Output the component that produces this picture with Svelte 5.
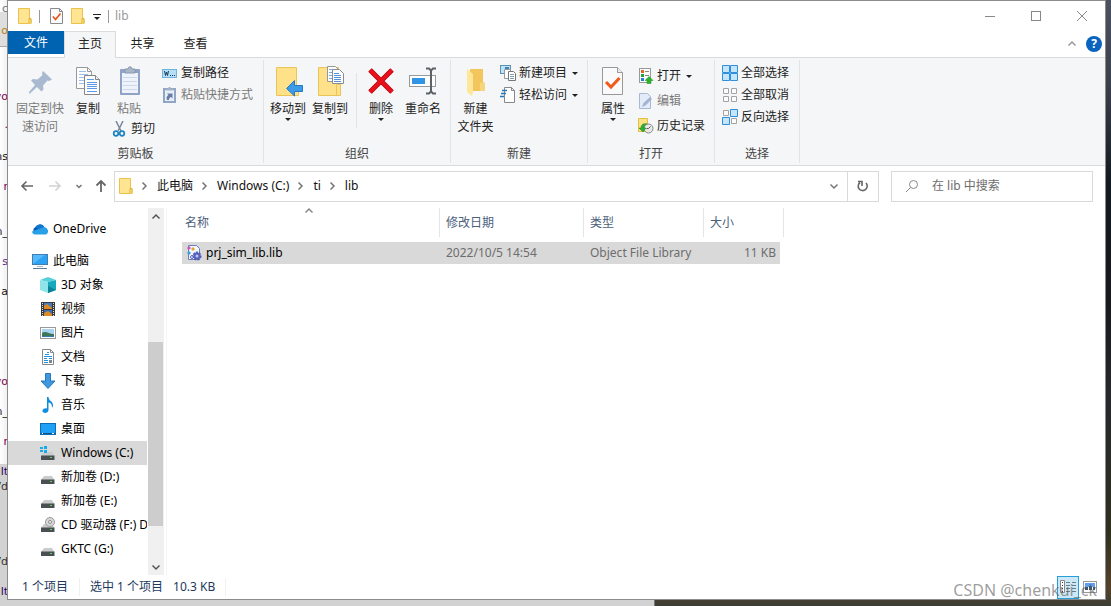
<script lang="ts">
  interface NavItem {
    icon: string;
    label: string;
    root?: boolean;
    selected?: boolean;
  }

  const tabs = ["主页", "共享", "查看"];

  const crumbs = ["此电脑", "Windows (C:)", "ti", "lib"];

  const navItems: NavItem[] = [
    { icon: "cloud", label: "OneDrive", root: true },
    { icon: "pc", label: "此电脑", root: true },
    { icon: "cube", label: "3D 对象" },
    { icon: "video", label: "视频" },
    { icon: "picture", label: "图片" },
    { icon: "document", label: "文档" },
    { icon: "download", label: "下载" },
    { icon: "music", label: "音乐" },
    { icon: "desktop", label: "桌面" },
    { icon: "drive-win", label: "Windows (C:)", selected: true },
    { icon: "drive", label: "新加卷 (D:)" },
    { icon: "drive", label: "新加卷 (E:)" },
    { icon: "drive-cd", label: "CD 驱动器 (F:) DVD" },
    { icon: "drive", label: "GKTC (G:)" },
  ];

  const files = [
    {
      name: "prj_sim_lib.lib",
      modified: "2022/10/5 14:54",
      type: "Object File Library",
      size: "11 KB",
    },
  ];

  // what shows of the editor behind the window
  const codeLines = [
    { y: 0, text: "c", color: "#777" },
    { y: 22, text: "o", color: "#b87d14" },
    { y: 88, text: "vo", color: "#7f0055" },
    { y: 116, text: ".", color: "#7f0055" },
    { y: 148, text: "ns", color: "#111" },
    { y: 178, text: "r", color: "#7f0055" },
    { y: 223, text: "n_", color: "#222" },
    { y: 253, text: "s", color: "#5b2a86" },
    { y: 283, text: "a", color: "#111" },
    { y: 373, text: "vo", color: "#7f0055" },
    { y: 403, text: "n_", color: "#222" },
    { y: 433, text: "r", color: "#7f0055" },
    { y: 463, text: "lt", color: "#2a0055" },
    { y: 478, text: "Vd", color: "#333" },
    { y: 553, text: "Vd", color: "#333" },
    { y: 583, text: "lt", color: "#2a0055" },
  ];

  let search = $state("");
</script>

{#snippet icon(name: string)}
  {#if name === "folder"}
    <svg width="14" height="16" viewBox="0 0 14 16">
      <path d="M.5.5h11v10l1.5.5v4.500H.5z" fill="#ffe591" stroke="#ecc24a" />
      <path d="M11 15.500v-5h2v5" fill="#ffe591" stroke="#e0b030" />
    </svg>
  {:else if name === "check-page"}
    <svg width="13" height="16" viewBox="0 0 13 16">
      <path d="M.5.500h9l3 3v12H.5z" fill="#fafafa" stroke="#8a8a8a" />
      <path d="M9.500.500v3h3" fill="none" stroke="#8a8a8a" />
      <path d="M3 8.500l2.500 3 5-6" fill="none" stroke="#e8541c" stroke-width="1.700" />
    </svg>
  {:else if name === "pin"}
    <svg width="32" height="32" viewBox="0 0 32 32">
      <path d="M19 5l9 8.500-3 1.500-1.500-.5-4.500 5 .5 4-2 2-4.500-4.500-7 6.500-1 0 0-1.500 6-7L7 14.500l2-1.500 4.500.5 5-4.500-.5-2z" fill="#a9b9d0" />
    </svg>
  {:else if name === "copy"}
    <svg width="32" height="32" viewBox="0 0 32 32">
      <path d="M4.500 1.500h11l4 4v17h-15z" fill="#fdfdfd" stroke="#999" />
      <path d="M15.500 1.500v4h4" fill="none" stroke="#999" />
      <path d="M7 5.500h7M7 8.500h9M7 11.500h9M7 14.500h9M7 17.500h9" stroke="#9cc0ee" />
      <path d="M12.500 9.500h11l4 4v15h-15z" fill="#fdfdfd" stroke="#858585" />
      <path d="M23.500 9.500v4h4" fill="#eee" stroke="#858585" />
      <path d="M15 13.500h7M15 16.500h10M15 18.500h10M15 20.500h10M15 22.500h10M15 25.500h10" stroke="#5b98ea" />
    </svg>
  {:else if name === "paste"}
    <svg width="32" height="32" viewBox="0 0 32 32">
      <rect x="7" y="3" width="20" height="26" rx="1" fill="#8fa3c6" />
      <path d="M9 7h16v20H9z" fill="#edf2fb" />
      <path d="M10 11.500h14M10 15.500h14M10 19.500h14M10 23.500h14" stroke="#ccd9ed" />
      <path d="M12 7V3h3c0-3 4-3 4 0h3v4z" fill="#aab5c6" stroke="#8998b1" />
    </svg>
  {:else if name === "scissors"}
    <svg width="16" height="16" viewBox="0 0 16 16">
      <path d="M4 0l5 10M11 0L6 10" stroke="#76889d" stroke-width="1.500" />
      <circle cx="4" cy="12.500" r="2.300" fill="none" stroke="#1c82c6" stroke-width="1.700" />
      <circle cx="10" cy="12.500" r="2.300" fill="none" stroke="#1c82c6" stroke-width="1.700" />
    </svg>
  {:else if name === "path"}
    <svg width="16" height="16" viewBox="0 0 16 16">
      <rect x=".5" y="4.500" width="14" height="8" fill="#b5def7" stroke="#6fb4dd" />
      <path d="M2.500 6l1 4.500 1-3.500 1 3.500 1-4.500" fill="none" stroke="#163b5c" />
      <path d="M8 10.500h1M10 10.500h1M12 10.500h1" stroke="#163b5c" />
    </svg>
  {:else if name === "paste-link"}
    <svg width="16" height="16" viewBox="0 0 16 16">
      <rect x="2" y="2" width="11" height="13" fill="#e8eef8" stroke="#93a5c5" stroke-width="2" />
      <path d="M4 3.500v-2h2c0-2 3-2 3 0h2v2z" fill="#a3b1c8" />
      <path d="M5 13c-1-3 0-4 1.500-5L5 6.500h5.500v5L9 10c-1.500.5-2 1.500-2 3z" fill="#667da8" />
    </svg>
  {:else if name === "move-to"}
    <svg width="32" height="32" viewBox="0 0 32 32">
      <path d="M4.500 1.500h20v19l2 1v8h-22z" fill="#ffe18a" stroke="#eac459" />
      <path d="M30.500 19.500h-8v-5l-8 8 8 7.500v-4.500h8z" fill="#3c9be8" stroke="#2379c6" />
    </svg>
  {:else if name === "copy-to"}
    <svg width="32" height="32" viewBox="0 0 32 32">
      <path d="M4.500 1.500h20v17h2v11h-22z" fill="#ffe18a" stroke="#eac459" />
      <path d="M22.500 29v-10l4-1v11" fill="#ffe18a" stroke="#eac459" />
      <path d="M13.500.500h8l3 3v12h-11z" fill="#fdfdfd" stroke="#999" />
      <path d="M15 3.500h6M15 6.500h6M15 9.500h6M15 12.500h6" stroke="#7caae5" />
      <path d="M18.500 3.500h7l4 4v10h-11z" fill="#fdfdfd" stroke="#8b8b8b" />
      <path d="M20 7.500h5M20 9.500h7M20 11.500h7M20 13.500h7M20 15.500h7" stroke="#5792df" />
    </svg>
  {:else if name === "delete"}
    <svg width="32" height="32" viewBox="0 0 32 32">
      <path d="M5 4l22 22M27 4L5 26" stroke="#b6000d" stroke-width="5" />
      <path d="M5 4l22 22M27 4L5 26" stroke="#e8101b" stroke-width="3.500" />
    </svg>
  {:else if name === "rename"}
    <svg width="32" height="32" viewBox="0 0 32 32">
      <rect x="2.500" y="9.500" width="26" height="11" fill="#fff" stroke="#999" />
      <path d="M5 12h13v6H5z" fill="#3294e4" />
      <path d="M24 4v22M19 2.500h3l2 2 2-2h3M19 27.500h3l2-2 2 2h3" fill="none" stroke="#5d6266" stroke-width="2" />
    </svg>
  {:else if name === "new-folder"}
    <svg width="32" height="32" viewBox="0 0 32 32">
      <path d="M10 3h13v22H10z" fill="#f2c65c" />
      <path d="M20 17l4-1 1 1v8h-5z" fill="#f6d57d" />
      <path d="M7 3l6 5v18l-1 4-5-4z" fill="#ffe699" />
    </svg>
  {:else if name === "new-item"}
    <svg width="16" height="16" viewBox="0 0 16 16">
      <rect x=".5" y=".500" width="10" height="8" fill="#bce3f7" stroke="#5b90ae" />
      <rect x="5" y="2" width="4" height="3" fill="#3b82b5" />
      <path d="M4.500 4.500h6v9h-6z" fill="#fff" stroke="#999" />
      <path d="M8.500 6.500h5l2 2v7h-7z" fill="#fff" stroke="#777" />
      <path d="M10 9.500h4M10 11.500h4M10 13.500h4" stroke="#7d9fbc" />
    </svg>
  {:else if name === "easy-access"}
    <svg width="16" height="16" viewBox="0 0 16 16">
      <path d="M4.500.500h7l3 3v12h-10z" fill="#fff" stroke="#888" />
      <path d="M11.500.500v3h3" fill="none" stroke="#888" />
      <path d="M2 3.500h5M1 6.500h5M0 9.500h4" stroke="#2879b9" stroke-width="1.300" />
    </svg>
  {:else if name === "properties"}
    <svg width="32" height="32" viewBox="0 0 32 32">
      <path d="M5.500 1.500h15l5 5v22h-20z" fill="#fafafa" stroke="#999" />
      <path d="M20.500 1.500v5h5" fill="#eee" stroke="#999" />
      <path d="M9 16l5 5 8.500-9" fill="none" stroke="#f05a1a" stroke-width="3" />
    </svg>
  {:else if name === "open"}
    <svg width="16" height="16" viewBox="0 0 16 16">
      <rect x="1.500" y=".500" width="11" height="14" fill="#fff" stroke="#999" />
      <path d="M3 2h3v3H3z" fill="#e5681e" />
      <path d="M3 6h3v3H3z" fill="#21a23b" />
      <path d="M3 10h3v3H3z" fill="#2980d3" />
      <path d="M7 3.500h4M7 7.500h4" stroke="#888" />
      <path d="M9 15.500v-3H7l4-4 4 4h-2v3z" fill="#2cb52c" stroke="#1b8d1b" stroke-width=".5" />
    </svg>
  {:else if name === "edit"}
    <svg width="16" height="16" viewBox="0 0 16 16">
      <path d="M1.500.500h8l3 3v12h-11z" fill="#e3ebf8" stroke="#a9b9d5" />
      <path d="M4 14l1.500-4L12 4l2 2-6.500 6.500z" fill="#a2b4d2" />
    </svg>
  {:else if name === "history"}
    <svg width="16" height="16" viewBox="0 0 16 16">
      <path d="M.5.500h9v13h-9z" fill="#ffe285" stroke="#e3bd40" />
      <circle cx="10.500" cy="10.500" r="4.500" fill="#e8e8e8" stroke="#888" />
      <path d="M10.500 10.500l2-2M10.500 10.500h-2" stroke="#555" />
      <path d="M1 10h2c0-4 3-5 6-4-2 0-3 2-3 4h2l-3 4z" fill="#2fae33" stroke="#178322" stroke-width=".5" />
    </svg>
  {:else if name === "select-all"}
    <svg width="16" height="16" viewBox="0 0 16 16">
      <path d="M.5.500h7v7h-7zM8.500.500h7v7h-7zM.5 8.500h7v7h-7zM8.500 8.500h7v7h-7z" fill="#c4e5fb" stroke="#2f8fdb" />
    </svg>
  {:else if name === "select-none"}
    <svg width="16" height="16" viewBox="0 0 16 16">
      <path d="M1.500 1.500h5v5h-5zM9.500 1.500h5v5h-5zM1.500 9.500h5v5h-5zM9.500 9.500h5v5h-5z" fill="#fcfcfc" stroke="#a3a3a3" />
    </svg>
  {:else if name === "select-invert"}
    <svg width="16" height="16" viewBox="0 0 16 16">
      <path d="M1.500 1.500h5v5h-5zM9.500 9.500h5v5h-5z" fill="#fcfcfc" stroke="#a3a3a3" />
      <path d="M8.500.500h7v7h-7zM.5 8.500h7v7h-7z" fill="#c4e5fb" stroke="#2f8fdb" />
    </svg>
  {:else if name === "cloud"}
    <svg width="16" height="16" viewBox="0 0 16 16">
      <path d="M3.500 12.500a3.500 3.500 0 0 1 0-6.500A5 5 0 0 1 12 5.500l-4 5z" fill="#0a5cb5" />
      <path d="M3.500 6a5 5 0 0 1 9 .5L15 8 8 9z" fill="#1078cf" />
      <path d="M0 10.500L11 6.500a4 4 0 0 1 5 4.500 3 3 0 0 1-3 2.500H3.500A3.500 3.500 0 0 1 0 10.500z" fill="#28a0e8" />
    </svg>
  {:else if name === "pc"}
    <svg width="16" height="16" viewBox="0 0 16 16">
      <rect x=".5" y="1.500" width="15" height="10" fill="#55b9fa" stroke="#3c7fb0" />
      <path d="M1 11L13 2h2v9z" fill="#2ba2f4" />
      <path d="M1 15.500h14" stroke="#5c7d94" />
      <path d="M5 13.500h6" stroke="#a9bac7" />
    </svg>
  {:else if name === "cube"}
    <svg width="16" height="16" viewBox="0 0 16 16">
      <path d="M0 3l8-3 8 3-8 2z" fill="#56cfdb" />
      <path d="M0 3l8 2v11l-8-3z" fill="#8fe4ec" />
      <path d="M16 3L8 5v11l8-3z" fill="#16a9bb" />
      <path d="M8 9l8 4-8 3z" fill="#0b8296" />
    </svg>
  {:else if name === "video"}
    <svg width="16" height="16" viewBox="0 0 16 16">
      <path d="M1 1h14v14H1z" fill="#383838" />
      <path d="M4 2h8v6H4z" fill="#487bb9" />
      <path d="M4 9h8v6H4z" fill="#3b6bae" />
      <path d="M4 5l3-2 5 4v1H4zM4 12l4-2 4 3v2H4z" fill="#dc8a25" />
      <path d="M2.500 2v13M13.500 2v13" stroke="#ddd" stroke-dasharray="1 1" />
    </svg>
  {:else if name === "picture"}
    <svg width="16" height="16" viewBox="0 0 16 16">
      <rect x=".5" y="2.500" width="15" height="11" fill="#fff" stroke="#999" />
      <path d="M2 4h12v8H2z" fill="#a8d4f0" />
      <path d="M2 8c4-3 6 1 12 1v3H2z" fill="#3e765c" />
      <path d="M2 11h12v1H2z" fill="#367bb5" />
    </svg>
  {:else if name === "document"}
    <svg width="16" height="16" viewBox="0 0 16 16">
      <path d="M2.500.500h8l3 3v12h-11z" fill="#fff" stroke="#888" />
      <path d="M10.500.500v3h3" fill="none" stroke="#888" />
      <path d="M7 3.500h2M5 5.500h4M4 7.500h8M4 9.500h3M9 9.500h3M4 11.500h4M4 13.500h4" stroke="#1f93dc" />
      <path d="M9 11h3v3H9z" fill="#768a96" />
    </svg>
  {:else if name === "download"}
    <svg width="16" height="16" viewBox="0 0 16 16">
      <path d="M5.500.500h5v7.500h4.500l-7 7.500L1 8h4.500z" fill="#3f97df" stroke="#2879bb" />
    </svg>
  {:else if name === "music"}
    <svg width="16" height="16" viewBox="0 0 16 16">
      <path d="M7 0h1.500c0 4 5 4 4.500 9l-1 2c0-4-1-5-3.500-5.500V13c0 4-7 3.500-6 .5.500-2 3-2.500 4.500-2z" fill="#118de0" />
    </svg>
  {:else if name === "desktop"}
    <svg width="16" height="16" viewBox="0 0 16 16">
      <rect x=".5" y="2.500" width="15" height="11" fill="#1da0f5" stroke="#0b6db6" />
      <path d="M1 12.500h14" stroke="#0d568d" />
      <path d="M2 12.500h1M12 12.500h2" stroke="#fff" />
    </svg>
  {:else if name === "drive" || name === "drive-win" || name === "drive-cd"}
    <svg width="16" height="16" viewBox="0 0 16 16">
      <path d="M4 7h8l2.500 4H1z" fill="#c9cbcd" />
      <path d="M1 10.500h13.500V15H1z" fill="#4b4f51" />
      <path d="M10 12.500h2" stroke="#42e24c" />
      {#if name === "drive-win"}
        <path d="M0 2h3v2H0zM4 1h3v3H4zM0 5h3v2H0zM4 5h3v3H4z" fill="#16abec" />
      {:else if name === "drive-cd"}
        <circle cx="10" cy="5" r="4.500" fill="#d8d8d8" stroke="#9a9a9a" />
        <circle cx="10" cy="5" r="1.500" fill="#fff" stroke="#888" />
      {/if}
    </svg>
  {:else if name === "lib-file"}
    <svg width="16" height="16" viewBox="0 0 16 16">
      <path d="M2.500.500h8l3 3v11h-11z" fill="#f2f6ff" stroke="#6b7fb5" />
      <path d="M3 1l2 2-2 2-2-2z" fill="#cf4fc4" />
      <path d="M7 2l2 2-2 2-2-2z" fill="#e5a62c" />
      <path d="M3 6l2 2-2 2-2-2z" fill="#3a9fdd" />
      <circle cx="11" cy="11" r="3.500" fill="#b9c2f2" stroke="#4a53ac" stroke-width="2" stroke-dasharray="2 1" />
      <circle cx="11" cy="11" r="2.500" fill="none" stroke="#5861bd" stroke-width="2" />
      <circle cx="6" cy="12" r="1.500" fill="none" stroke="#5861bd" />
    </svg>
  {/if}
{/snippet}

{#snippet chevron(dir: string)}
  <svg class="chevron {dir}" width="10" height="10" viewBox="0 0 10 10">
    <path d="M1.500 3.500L5 7l3.500-3.500" fill="none" stroke="currentColor" stroke-width="1.500" />
  </svg>
{/snippet}

{#snippet big(name: string, lines: string[], menu = false, disabled = false)}
  <button class="big" {disabled}>
    {@render icon(name)}
    {#each lines as line}
      <span>{line}</span>
    {/each}
    {#if menu}<i class="caret"></i>{/if}
  </button>
{/snippet}

{#snippet small(name: string, label: string, menu = false, disabled = false)}
  <button class="small" {disabled}>
    {@render icon(name)}
    <span>{label}</span>
    {#if menu}<i class="caret"></i>{/if}
  </button>
{/snippet}

<div class="screen">
  <div class="editor" aria-hidden="true">
    <div class="editor-tabs"></div>
    <div class="editor-panel"></div>
    {#each codeLines as line}
      <span class="code" style="top: {line.y}px; color: {line.color}">{line.text}</span>
    {/each}
  </div>

  <main class="window">
    <header class="titlebar">
      <div class="quick">
        {@render icon("folder")}
        <i class="bar"></i>
        <button class="plain" aria-label="属性">{@render icon("check-page")}</button>
        <button class="plain" aria-label="新建文件夹">{@render icon("folder")}</button>
        <button class="plain customize" aria-label="自定义快速访问工具栏"><i class="caret"></i></button>
        <i class="bar"></i>
        <span class="title">lib</span>
      </div>
      <button class="control" aria-label="最小化">
        <svg width="12" height="12" viewBox="0 0 12 12"><path d="M1 6.500h10" stroke="#888" /></svg>
      </button>
      <button class="control" aria-label="最大化">
        <svg width="12" height="12" viewBox="0 0 12 12"><rect x="1.500" y="1.500" width="9" height="9" fill="none" stroke="#888" /></svg>
      </button>
      <button class="control" aria-label="关闭">
        <svg width="12" height="12" viewBox="0 0 12 12"><path d="M1 1l10 10M11 1L1 11" stroke="#888" /></svg>
      </button>
    </header>

    <nav class="tabs">
      <button class="tab file">文件</button>
      {#each tabs as tab, i}
        <button class="tab" class:active={i === 0}>{tab}</button>
      {/each}
      <div class="tabs-end">
        <button class="plain muted" aria-label="最小化功能区">{@render chevron("up")}</button>
        <button class="help" aria-label="帮助">?</button>
      </div>
    </nav>

    <section class="ribbon">
      <div class="group clipboard">
        <div class="tools">
          {@render big("pin", ["固定到快", "速访问"], false, true)}
          {@render big("copy", ["复制"])}
          <div class="paste-column">
            {@render big("paste", ["粘贴"], false, true)}
            {@render small("scissors", "剪切")}
          </div>
          <div class="stack">
            {@render small("path", "复制路径")}
            {@render small("paste-link", "粘贴快捷方式", false, true)}
          </div>
        </div>
        <div class="group-name">剪贴板</div>
      </div>
      <div class="group organize">
        <div class="tools">
          {@render big("move-to", ["移动到"], true)}
          {@render big("copy-to", ["复制到"], true)}
          <i class="divider"></i>
          {@render big("delete", ["删除"], true)}
          {@render big("rename", ["重命名"])}
        </div>
        <div class="group-name">组织</div>
      </div>
      <div class="group new">
        <div class="tools">
          {@render big("new-folder", ["新建", "文件夹"])}
          <div class="stack">
            {@render small("new-item", "新建项目", true)}
            {@render small("easy-access", "轻松访问", true)}
          </div>
        </div>
        <div class="group-name">新建</div>
      </div>
      <div class="group open">
        <div class="tools">
          {@render big("properties", ["属性"], true)}
          <div class="stack roomy">
            {@render small("open", "打开", true)}
            {@render small("edit", "编辑", false, true)}
            {@render small("history", "历史记录")}
          </div>
        </div>
        <div class="group-name">打开</div>
      </div>
      <div class="group select">
        <div class="tools">
          <div class="stack">
            {@render small("select-all", "全部选择")}
            {@render small("select-none", "全部取消")}
            {@render small("select-invert", "反向选择")}
          </div>
        </div>
        <div class="group-name">选择</div>
      </div>
    </section>

    <div class="address-row">
      <div class="history-buttons">
        <button class="plain" aria-label="后退">
          <svg width="14" height="14" viewBox="0 0 14 14"><path d="M13 7H2M6.500 2.500L2 7l4.500 4.500" fill="none" stroke="#666" stroke-width="1.600" /></svg>
        </button>
        <button class="plain" aria-label="前进" disabled>
          <svg width="14" height="14" viewBox="0 0 14 14"><path d="M1 7h11M7.500 2.500L12 7l-4.500 4.500" fill="none" stroke="#d2d2d2" stroke-width="1.600" /></svg>
        </button>
        <button class="plain recent" aria-label="最近浏览的位置">
          <svg width="8" height="8" viewBox="0 0 8 8"><path d="M1.500 3L4 5.500 6.500 3" fill="none" stroke="#777" stroke-width="1.500" /></svg>
        </button>
        <button class="plain" aria-label="上移">
          <svg width="14" height="14" viewBox="0 0 14 14"><path d="M7 13V2M2.500 6.500L7 2l4.500 4.500" fill="none" stroke="#666" stroke-width="1.800" /></svg>
        </button>
      </div>
      <div class="address">
        {@render icon("folder")}
        {#each crumbs as crumb}
          {@render chevron("right")}
          <a href="#{crumb}">{crumb}</a>
        {/each}
        <button class="plain drop" aria-label="以前的位置">{@render chevron("down")}</button>
        <button class="refresh" aria-label="刷新">
          <svg width="14" height="14" viewBox="0 0 14 14">
            <path d="M4 3.500A4.500 4.500 0 1 0 10 4" fill="none" stroke="#666" stroke-width="1.600" />
            <path d="M2 2.500h4V7" fill="none" stroke="#666" stroke-width="1.600" />
          </svg>
        </button>
      </div>
      <label class="search">
        <svg width="14" height="14" viewBox="0 0 14 14">
          <circle cx="8.500" cy="5.500" r="4" fill="none" stroke="#888" />
          <path d="M5.500 8.500L1 13" stroke="#888" />
        </svg>
        <input type="text" placeholder="在 lib 中搜索" aria-label="在 lib 中搜索" bind:value={search} />
      </label>
    </div>

    <div class="body">
      <ul class="tree">
        {#each navItems as item}
          <li>
            <a href="#{item.icon}" class:root={item.root} class:selected={item.selected}>
              {@render icon(item.icon)}
              <span>{item.label}</span>
            </a>
          </li>
        {/each}
      </ul>
      <div class="scrollbar">
        {@render chevron("up")}
        <div class="track"><div class="thumb"></div></div>
        {@render chevron("down")}
      </div>

      <section class="files">
        <table>
          <thead>
            <tr>
              <th class="name"><span class="sort">{@render chevron("up")}</span>名称</th>
              <th class="date">修改日期</th>
              <th class="type">类型</th>
              <th>大小</th>
            </tr>
          </thead>
          <tbody>
            {#each files as file}
              <tr>
                <td><div class="file-name">{@render icon("lib-file")}{file.name}</div></td>
                <td>{file.modified}</td>
                <td>{file.type}</td>
                <td class="size">{file.size}</td>
              </tr>
            {/each}
          </tbody>
        </table>
      </section>
    </div>

    <footer class="status">
      <span class="count">1 个项目</span>
      <span class="picked">选中 1 个项目</span>
      <span class="bytes">10.3 KB</span>
      <div class="views">
        <button class="view on" aria-label="详细信息">
          <svg width="16" height="14" viewBox="0 0 16 14">
            <path d="M.5.500h4v12h-4z" fill="#fff" stroke="#888" />
            <path d="M2 2.500h1M2 5.500h1M2 8.500h1M2 11.500h1" stroke="#333" />
            <path d="M6 2.500h4M12 2.500h4M6 5.500h4M12 5.500h4M6 8.500h4M12 8.500h4M6 11.500h4M12 11.500h4" stroke="#6b7f88" />
          </svg>
        </button>
        <button class="view" aria-label="大图标">
          <svg width="14" height="12" viewBox="0 0 14 12">
            <rect x=".5" y=".500" width="13" height="11" fill="#fff" stroke="#999" />
            <path d="M2 2h10v4H2z" fill="#5f9ff0" />
            <path d="M2 6h3v3H2zM6 5h3v4H6zM10 6h2v3h-2z" fill="#38566b" />
          </svg>
        </button>
      </div>
      <span class="watermark">CSDN @chenkui_ck</span>
    </footer>
  </main>
</div>

<style>
  :global(body) {
    margin: 0;
  }

  .screen {
    position: relative;
    box-sizing: border-box;
    min-height: 100vh;
    padding: 1px 6px 7px 8px;
    display: flex;
    background: linear-gradient(#4d5260, #3a3f4c 14%, #121920 30%, #17191d 50%, #25282c 65%, #30301f 88%, #54422a 97%, #3c3d35);
    font-family: "Noto Sans", "Noto Sans CJK SC", sans-serif;
    font-size: 12px;
    line-height: 18px;
    color: #111;
    overflow: hidden;
  }

  .editor {
    position: absolute;
    top: 0;
    bottom: 0;
    left: 0;
    width: 59%;
    background: linear-gradient(90deg, #fff, #eee 8px);
    border-right: 1px solid #777;
    box-sizing: border-box;
  }

  .editor-tabs {
    height: 34px;
    margin-top: 12px;
    background: #dedede;
    border-bottom: 1px solid #aaa;
  }

  .editor-panel {
    position: absolute;
    top: 464px;
    bottom: 0;
    width: 100%;
    background: #d2d2d2;
  }

  .code {
    position: absolute;
    left: -7px;
    width: 15px;
    text-align: right;
    font-family: "DejaVu Sans", sans-serif;
    font-size: 11px;
  }

  .window {
    position: relative;
    flex: 1;
    min-width: 0;
    display: flex;
    flex-direction: column;
    background: #fff;
    box-shadow: 0 0 0 1px #8b8b8b;
  }

  button {
    font: inherit;
    color: #222;
    background: none;
    border: none;
    padding: 0;
  }

  button:disabled {
    color: #7a7a7a;
  }

  a {
    color: inherit;
    text-decoration: none;
  }

  svg {
    display: block;
    flex: none;
  }

  .plain {
    display: flex;
    align-items: center;
    justify-content: center;
  }

  .chevron.up {
    transform: rotate(180deg);
  }

  .chevron.right {
    transform: rotate(-90deg);
  }

  .caret {
    flex: none;
    width: 0;
    height: 0;
    border: 3px solid transparent;
    border-top-color: #222;
    border-bottom: none;
  }

  .titlebar {
    display: flex;
    height: 30px;
  }

  .quick {
    flex: 1;
    display: flex;
    align-items: center;
    gap: 8px;
    padding-left: 10px;
  }

  .bar {
    width: 1px;
    height: 13px;
    background: #999;
  }

  .quick .bar {
    margin: 0 2px 0 -1px;
  }

  .quick .title {
    margin-left: -4px;
    color: #999;
  }

  .customize {
    width: 8px;
    height: 8px;
    align-items: flex-end;
    position: relative;
  }

  .customize::before {
    content: "";
    position: absolute;
    top: 2px;
    width: 8px;
    height: 1px;
    background: #222;
  }

  .control {
    width: 46px;
    display: flex;
    align-items: center;
    justify-content: center;
  }

  .tabs {
    display: flex;
    height: 26px;
    border-bottom: 1px solid #dadbdc;
  }

  .tab {
    width: 53px;
    height: 26px;
    padding-bottom: 1px;
  }

  .tab.file {
    width: 56px;
    height: 23px;
    padding: 0;
    background: #0063b1;
    color: #fff;
  }

  .tab.active {
    width: 52px;
    height: 27px;
    padding-bottom: 3px;
    background: #f5f6f7;
    border: 1px solid #dadbdc;
    border-bottom: none;
  }

  .tabs-end {
    margin-left: auto;
    display: flex;
    align-items: center;
    gap: 9px;
    padding-right: 3px;
  }

  .plain.muted {
    color: #999;
  }

  .help {
    width: 16px;
    height: 16px;
    border-radius: 50%;
    background: #0a63bf;
    color: #fff;
    font-weight: 700;
    line-height: 16px;
  }

  .ribbon {
    display: flex;
    height: 107px;
    background: #f5f6f7;
    border-bottom: 1px solid #dadbdc;
  }

  .group {
    display: flex;
    flex-direction: column;
    margin: 2px 0;
    box-sizing: border-box;
    border-right: 1px solid #e2e3e4;
  }

  .tools {
    flex: 1;
    display: flex;
    align-items: flex-start;
  }

  .group-name {
    height: 18px;
    text-align: center;
    color: #444;
  }

  .clipboard {
    width: 256px;
  }

  .organize {
    width: 187px;
  }

  .new {
    width: 137px;
  }

  .open {
    width: 127px;
  }

  .select {
    width: 85px;
  }

  .big {
    display: flex;
    flex-direction: column;
    align-items: center;
    padding-top: 6px;
    width: 42px;
    white-space: nowrap;
  }

  .big svg {
    margin-bottom: 2px;
  }

  .small {
    display: flex;
    align-items: center;
    gap: 3px;
    height: 22px;
    white-space: nowrap;
  }

  .small .caret {
    margin-left: 2px;
  }

  .stack {
    display: flex;
    flex-direction: column;
    align-items: flex-start;
    padding-top: 2px;
  }

  .stack.roomy {
    gap: 3px;
    padding-top: 5px;
  }

  .clipboard .tools {
    padding-left: 8px;
  }

  .clipboard .big {
    width: 48px;
  }

  .paste-column {
    display: flex;
    flex-direction: column;
    align-items: flex-start;
    width: 42px;
    margin-right: 8px;
  }

  .paste-column .big {
    width: 34px;
  }

  .organize .tools {
    padding-left: 3px;
  }

  .divider {
    width: 1px;
    height: 55px;
    margin: 13px 3px 0 5px;
    background: #e2e3e4;
  }

  .new .big {
    width: 49px;
  }

  .open .big {
    width: 50px;
  }

  .select .tools {
    padding-left: 7px;
  }

  .address-row {
    display: flex;
    align-items: center;
    height: 40px;
    padding-right: 12px;
  }

  .history-buttons {
    display: flex;
    align-items: center;
    gap: 12px;
    width: 106px;
    padding-left: 12px;
    box-sizing: border-box;
  }

  .history-buttons .plain {
    width: 14px;
  }

  .history-buttons .plain + .plain {
    margin-left: 2px;
  }

  .history-buttons .plain.recent {
    width: 10px;
    margin: 0 -4px 0 0;
  }

  .address {
    flex: 1;
    display: flex;
    align-items: center;
    height: 29px;
    border: 1px solid #d9d9d9;
    padding-left: 4px;
  }

  .address .chevron {
    margin: 0 8px 0 6px;
    color: #777;
  }

  .drop {
    margin-left: auto;
    height: 29px;
  }

  .refresh {
    display: flex;
    align-items: center;
    justify-content: center;
    width: 31px;
    height: 29px;
    border-left: 1px solid #d9d9d9;
  }

  .search {
    display: flex;
    align-items: center;
    gap: 13px;
    box-sizing: border-box;
    width: 202px;
    height: 31px;
    margin-left: 12px;
    padding-left: 13px;
    border: 1px solid #d9d9d9;
  }

  .search input {
    flex: 1;
    min-width: 0;
    padding: 0;
    border: none;
    outline: none;
    font: inherit;
    background: none;
  }

  .search input::placeholder {
    color: #6d6d6d;
  }

  .body {
    flex: 1;
    display: flex;
    padding-top: 2px;
  }

  .tree {
    width: 139px;
    margin: 0;
    padding: 9px 0 14px;
    list-style: none;
    overflow: hidden;
  }

  .tree li:nth-child(2) {
    margin-top: 8px;
  }

  .tree a {
    display: flex;
    align-items: center;
    gap: 5px;
    height: 24px;
    padding-left: 32px;
    white-space: nowrap;
    color: #000;
  }

  .tree a.root {
    padding-left: 24px;
  }

  .tree a.selected {
    background: #d9d9d9;
  }

  .scrollbar {
    display: flex;
    flex-direction: column;
    align-items: center;
    width: 16px;
    margin-left: 1px;
    padding: 4px 0 3px;
    box-sizing: border-box;
    background: #f0f0f0;
    color: #555;
  }

  .track {
    flex: 1;
    width: 100%;
    display: flex;
    flex-direction: column;
    justify-content: flex-end;
    padding: 3px 1px 36px 0;
    box-sizing: border-box;
  }

  .thumb {
    height: 61%;
    background: #cdcdcd;
  }

  .files {
    flex: 1;
    margin-left: 2px;
    padding-left: 15px;
    border-left: 1px solid #f5f5f5;
  }

  table {
    table-layout: fixed;
    width: 602px;
    border-collapse: separate;
    border-spacing: 0;
  }

  th {
    height: 29px;
    padding: 0 0 0 6px;
    box-sizing: border-box;
    border-right: 1px solid #e5e5e5;
    text-align: left;
    font-weight: 400;
    color: #4c607a;
  }

  th.name {
    position: relative;
    width: 258px;
    padding-left: 3px;
  }

  .sort {
    position: absolute;
    top: -2px;
    left: 122px;
    color: #888;
  }

  th.date {
    width: 144px;
  }

  th.type {
    width: 120px;
  }

  tbody::before {
    content: "";
    display: block;
    height: 5px;
  }

  td {
    height: 22px;
    padding: 0 0 0 6px;
    background: #d9d9d9;
    color: #6d6d6d;
  }

  td:first-child {
    padding-left: 4px;
    color: #000;
  }

  td.size {
    padding-right: 4px;
    text-align: right;
    border-right: 4px solid transparent;
    background-clip: padding-box;
  }

  .file-name {
    display: flex;
    align-items: center;
    gap: 4px;
  }

  .status {
    display: flex;
    align-items: center;
    height: 24px;
    color: #1e395b;
  }

  .count {
    width: 57px;
    padding-left: 14px;
    border-right: 1px solid #f0f0f0;
  }

  .picked {
    padding-left: 10px;
  }

  .bytes {
    padding: 0 10px;
    border-right: 1px solid #f0f0f0;
  }

  .views {
    display: flex;
    align-items: center;
    margin-left: auto;
    padding-right: 5px;
  }

  .view {
    box-sizing: border-box;
    width: 21px;
    height: 23px;
    display: flex;
    align-items: center;
    justify-content: center;
  }

  .view.on {
    width: 22px;
    background: #cce8f6;
    border: 1px solid #26a0da;
  }

  .watermark {
    position: absolute;
    right: 8px;
    bottom: 0;
    font-size: 16px;
    color: rgba(90, 90, 90, 0.6);
    pointer-events: none;
  }
</style>
